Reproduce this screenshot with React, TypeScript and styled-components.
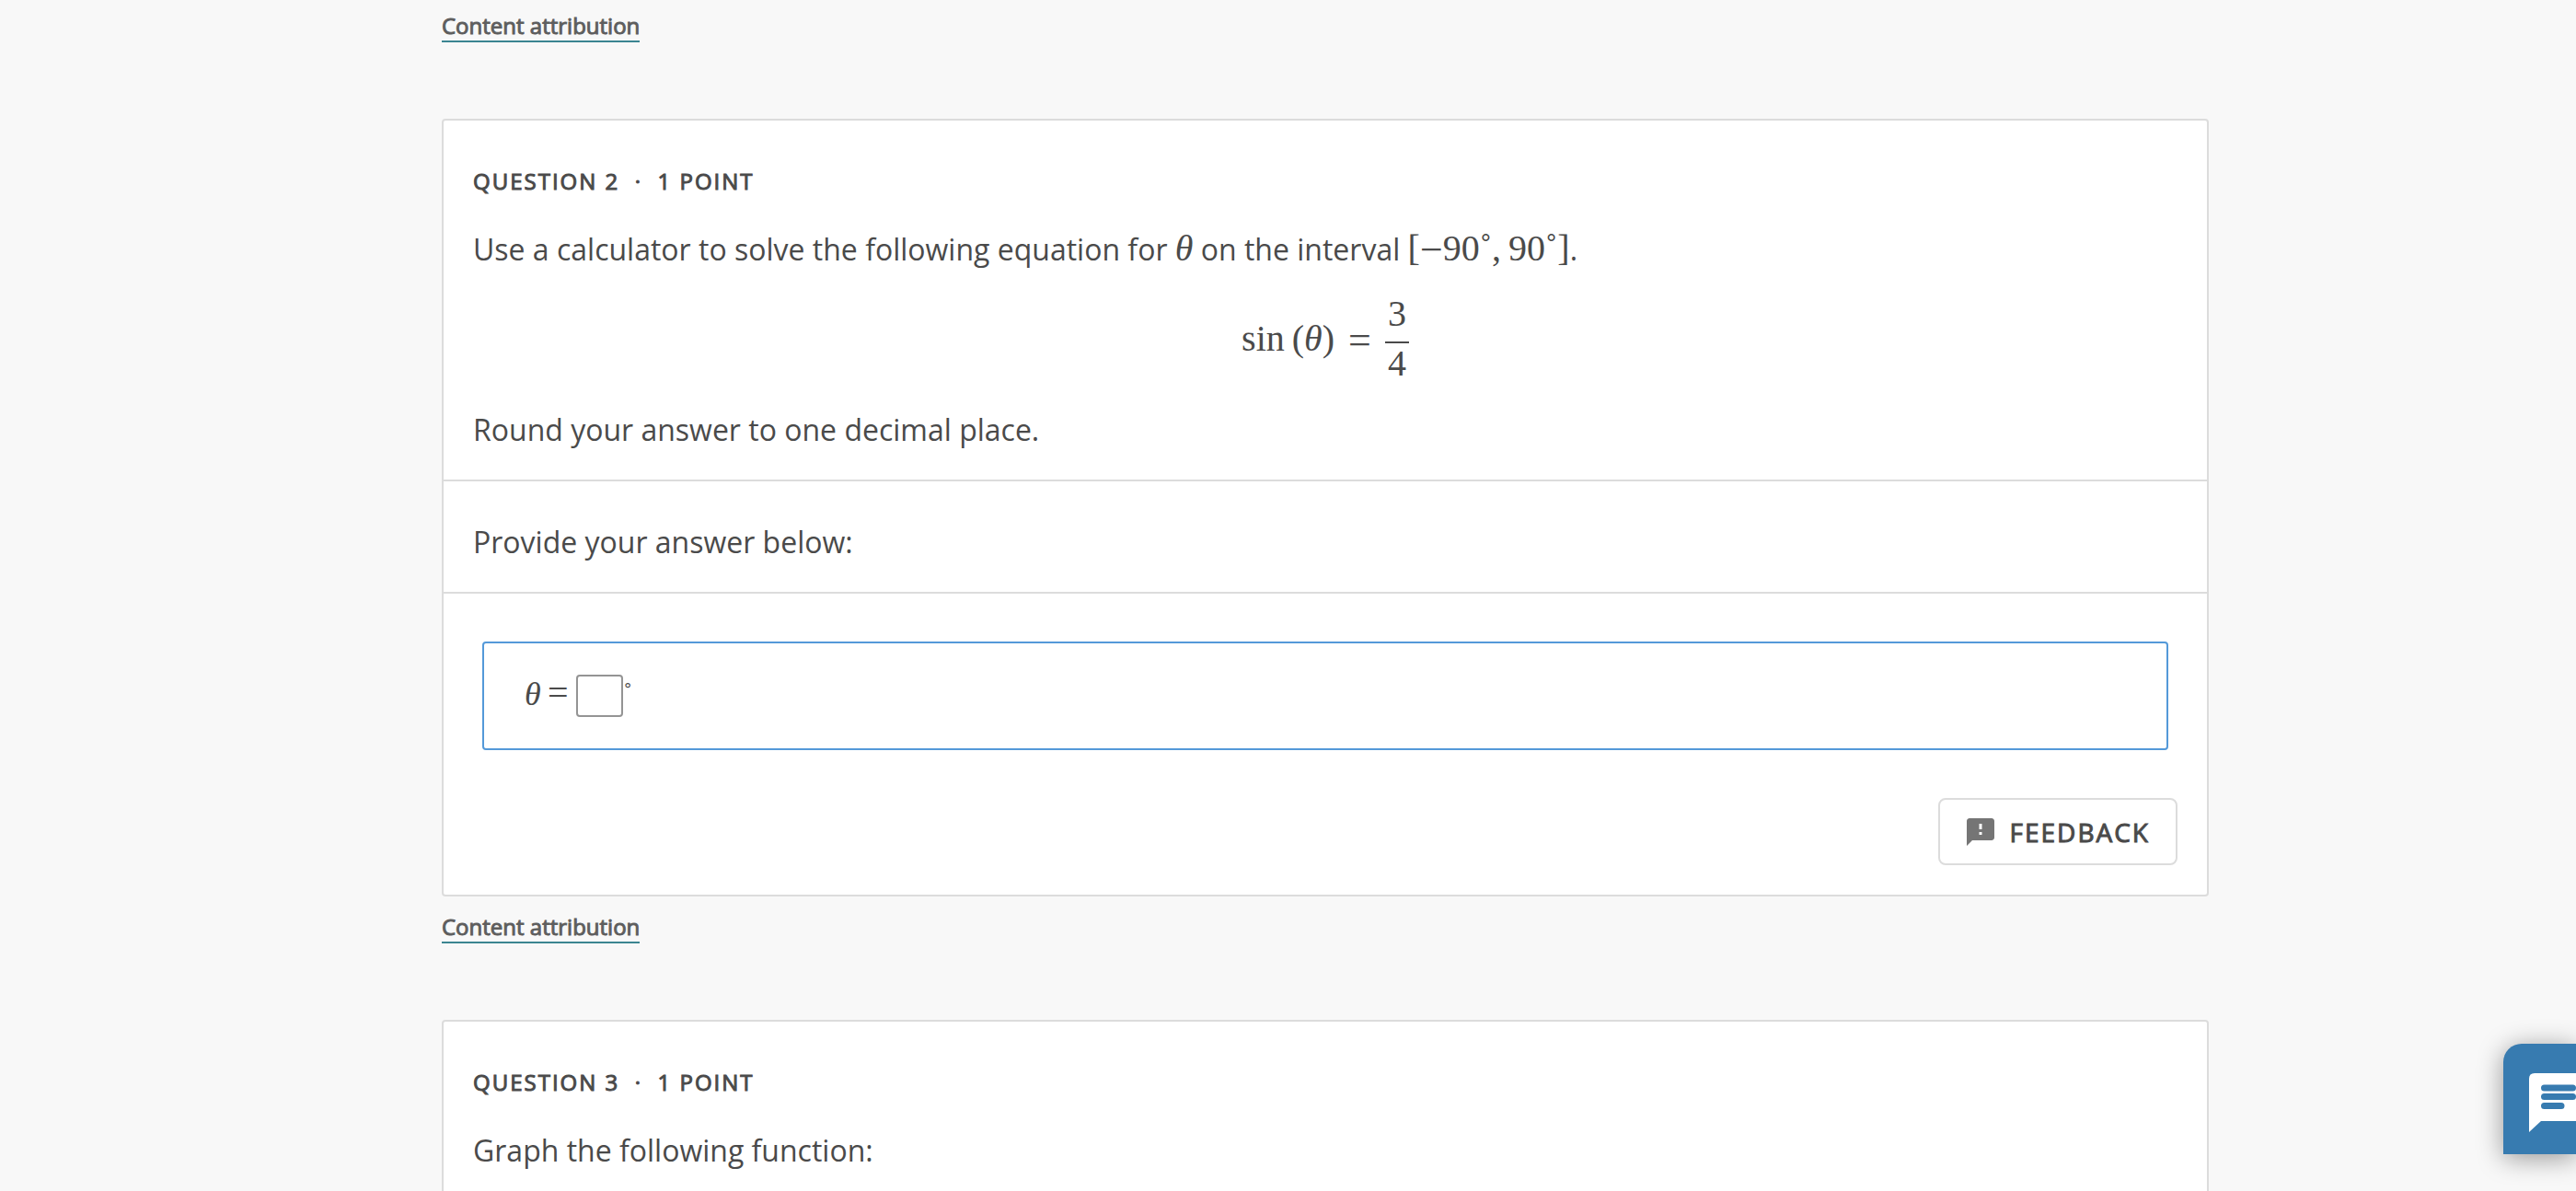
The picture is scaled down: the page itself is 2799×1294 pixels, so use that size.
import React from "react";
import styled, { createGlobalStyle } from "styled-components";

const GlobalStyle = createGlobalStyle`
  *, *::before, *::after { box-sizing: border-box; }
  body {
    margin: 0;
    background: #f8f8f8;
    color: #4a4a4a;
    font-family: "Open Sans", "Noto Sans", sans-serif;
    font-size: 32px;
    line-height: 48px;
  }
`;

const Page = styled.main`
  height: 100vh;
  overflow: hidden;
  padding: 12px 399px 0 480px;
`;

const AttributionRow = styled.div<{ $below?: boolean }>`
  display: flex;
  padding-top: ${(p) => (p.$below ? 17 : 0)}px;
  padding-bottom: 83px;
`;

const AttributionLink = styled.a`
  color: #5e5e5e;
  font-size: 24px;
  line-height: 32px;
  text-decoration: none;
  border-bottom: 2px solid #3b8591;
  -webkit-text-stroke: 1px #5e5e5e;
`;

const Card = styled.article`
  background: #fff;
  border: 2px solid #dcdcdc;
  border-radius: 4px;
`;

const Section = styled.section<{ $top: number }>`
  padding: ${(p) => p.$top}px 32px 30px;
  & + & {
    border-top: 2px solid #dcdcdc;
  }
`;

const QuestionTitle = styled.h2`
  margin: 0 0 33px;
  font-size: 24px;
  font-weight: 400;
  line-height: 34px;
  letter-spacing: 2px;
  text-transform: uppercase;
  white-space: pre;
  -webkit-text-stroke: 1px #4a4a4a;
`;

const Text = styled.p`
  margin: 0;
`;

const MathText = styled.span<{ $size?: number }>`
  font-family: "Liberation Serif", serif;
  font-size: ${(p) => p.$size ?? 40}px;
  line-height: 40px;
`;

const Operator = styled.span`
  font-size: 44px;
  line-height: 32px;
  vertical-align: -3px;
`;

const Equation = styled.div`
  display: flex;
  justify-content: center;
  align-items: center;
  gap: 15px;
  margin: 26px 0 28px;
  font-family: "Liberation Serif", serif;
  font-size: 40px;
  line-height: 40px;
`;

const Fraction = styled.span`
  display: flex;
  flex-direction: column;
  text-align: center;
`;

const Numerator = styled.span`
  padding: 0 3px 10px;
  border-bottom: 2px solid #4a4a4a;
`;

const Denominator = styled.span`
  padding: 2px 3px 0;
`;

const AnswerSection = styled.section`
  display: flex;
  flex-direction: column;
  gap: 52px;
  padding: 52px 32px 32px;
  border-top: 2px solid #dcdcdc;
`;

const AnswerBox = styled.label`
  display: flex;
  align-items: flex-start;
  margin: 0 10px;
  padding: 34px 44px;
  border: 2px solid #5499d9;
  border-radius: 4px;
`;

const AnswerInput = styled.input`
  width: 51px;
  height: 46px;
  margin: 0 0 0 9px;
  padding: 0 6px;
  border: 2px solid #949494;
  border-radius: 4px;
  background: #fff;
  color: inherit;
  font: 32px "Liberation Serif", serif;
  outline: none;
`;

const FeedbackButton = styled.button`
  display: flex;
  align-items: center;
  align-self: flex-end;
  gap: 14px;
  height: 73px;
  padding: 0 28px 0 26px;
  border: 2px solid #dcdcdc;
  border-radius: 8px;
  background: #fff;
  color: #4a4a4a;
  font-family: inherit;
  font-size: 28px;
  line-height: 40px;
  letter-spacing: 2px;
  text-transform: uppercase;
  cursor: pointer;
  -webkit-text-stroke: 1px #4a4a4a;
`;

const ChatButton = styled.button`
  position: fixed;
  right: 0;
  bottom: 40px;
  display: flex;
  align-items: center;
  width: 79px;
  height: 120px;
  padding: 8px 0 0 28px;
  overflow: visible;
  border: 0;
  border-radius: 20px 0 0 0;
  background: #377bb0;
  box-shadow: 0 4px 28px rgba(0, 0, 0, 0.4);
  cursor: pointer;
`;

function FeedbackIcon() {
  return (
    <svg width="36" height="36" viewBox="0 0 24 24" fill="#757575" aria-hidden="true">
      <path d="M20 2H4c-1.1 0-1.99.9-1.99 2L2 22l4-4h14c1.1 0 2-.9 2-2V4c0-1.1-.9-2-2-2zm-7 12h-2v-2h2v2zm0-4h-2V6h2v4z" />
    </svg>
  );
}

function ChatIcon() {
  return (
    <svg width="51" height="64" viewBox="0 0 51 64" aria-hidden="true">
      <path d="M6 0H51V52H13L0 64V6Q0 0 6 0Z" fill="#fff" />
      <g stroke="#377bb0" strokeWidth="7" strokeLinecap="round">
        <path d="M16.500 16H47.500M16.500 25.500H47.500M16.500 35.500H35" />
      </g>
    </svg>
  );
}

function Attribution({ below }: { below?: boolean }) {
  return (
    <AttributionRow $below={below}>
      <AttributionLink href="#attribution">Content attribution</AttributionLink>
    </AttributionRow>
  );
}

function Title({ number }: { number: number }) {
  return <QuestionTitle>{`Question ${number}\u00a0 ·\u00a0 1 point`}</QuestionTitle>;
}

export default function App() {
  return (
    <>
      <GlobalStyle />
      <Page>
        <Attribution />
        <Card>
          <Section $top={49}>
            <Title number={2} />
            <Text>
              Use a calculator to solve the following equation for{" "}
              <MathText>
                <i>θ</i>
              </MathText>{" "}
              on the interval{" "}
              <MathText>
                [<Operator>−</Operator>90˚,&thinsp;90˚]
              </MathText>
              .
            </Text>
            <Equation>
              <span>
                sin&thinsp;(<i>θ</i>)
              </span>
              <span>
                <Operator>=</Operator>
              </span>
              <Fraction>
                <Numerator>3</Numerator>
                <Denominator>4</Denominator>
              </Fraction>
            </Equation>
            <Text>Round your answer to one decimal place.</Text>
          </Section>
          <Section $top={42}>
            <Text>Provide your answer below:</Text>
          </Section>
          <AnswerSection>
            <AnswerBox>
              <MathText $size={36}>
                <i>θ</i>&thinsp;<MathText>=</MathText>
              </MathText>
              <AnswerInput type="text" aria-label="Theta in degrees" />
              <MathText $size={28}>˚</MathText>
            </AnswerBox>
            <FeedbackButton type="button">
              <FeedbackIcon />
              Feedback
            </FeedbackButton>
          </AnswerSection>
        </Card>
        <Attribution below />
        <Card>
          <Section $top={49}>
            <Title number={3} />
            <Text>Graph the following function:</Text>
          </Section>
        </Card>
      </Page>
      <ChatButton type="button" aria-label="Open chat">
        <ChatIcon />
      </ChatButton>
    </>
  );
}
